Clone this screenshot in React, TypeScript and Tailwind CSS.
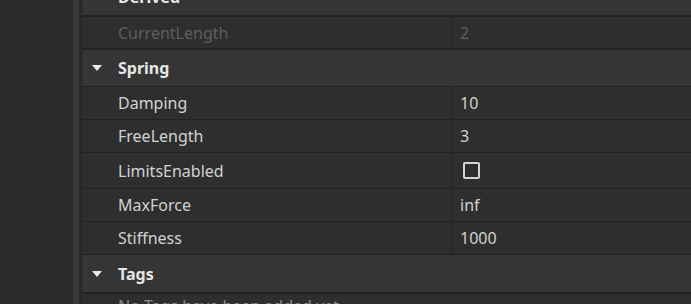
import React from 'react';

type Prop = { name: string; value?: string; checkbox?: boolean; disabled?: boolean; h: string };

const font = { fontFamily: '"Source Sans Pro", "Noto Sans", "Open Sans", sans-serif' };

// ── Section header row ──────────────────────────────────────────────────
function Header({ title, h, border }: { title: string; h: string; border: string }) {
  return (
    <div className={`flex items-center bg-[#353535] ${h} ${border} border-[#222222]`}>
      <div className="w-[36px] flex justify-end pr-[16px]">
        <svg width="10" height="6" viewBox="0 0 10 6">
          <path d="M0 0 H10 L5 6 Z" fill="#e8e8e8" />
        </svg>
      </div>
      <span className="text-[16px] font-bold text-[#e6e6e6]">{title}</span>
    </div>
  );
}

// ── Property row ────────────────────────────────────────────────────────
function Row({ p, border }: { p: Prop; border: string }) {
  const color = p.disabled ? 'text-[#5e5e5e]' : 'text-[#d2d2d2]';
  return (
    <div className={`flex ${p.h} ${border} border-[#222222] bg-[#2e2e2e]`}>
      <div className={`w-[370px] pl-[36px] flex items-center border-r border-[#222222] text-[16px] ${color}`}>
        {p.name}
      </div>
      <div className={`flex-1 pl-[8px] flex items-center text-[16px] ${color}`}>
        {p.checkbox ? (
          <div className="ml-[3px] w-[17px] h-[17px] rounded-[2px] border-2 border-[#d4d4d4]" />
        ) : (
          p.value
        )}
      </div>
    </div>
  );
}

const spring: Prop[] = [
  { name: 'Damping', value: '10', h: 'h-[33px]' },
  { name: 'FreeLength', value: '3', h: 'h-[33px]' },
  { name: 'LimitsEnabled', checkbox: true, h: 'h-[36px]' },
  { name: 'MaxForce', value: 'inf', h: 'h-[33px]' },
  { name: 'Stiffness', value: '1000', h: 'h-[33px]' },
];

export default function App() {
  return (
    <div className="w-[691px] h-[304px] overflow-hidden flex bg-[#2b2b2b] select-none" style={font}>
      <div className="w-[73px] bg-[#2b2b2b]" />
      <div className="w-[6px] bg-[#3a3a3a]" />
      <div className="w-[2px] bg-[#2b2b2b]" />
      <div className="flex-1 border-l border-[#222222] bg-[#2e2e2e]">
        <div className="-mt-[21px] flex flex-col">
          <Header title="Derived" h="h-[38px]" border="border-b-2" />
          <Row p={{ name: 'CurrentLength', value: '2', disabled: true, h: 'h-[33px]' }} border="border-b-2" />
          <Header title="Spring" h="h-[37px]" border="border-b" />
          {spring.map((p) => (
            <Row key={p.name} p={p} border="border-b" />
          ))}
          <Header title="Tags" h="h-[39px]" border="border-b-2" />
          <div className="h-[33px] pl-[36px] pt-[1px] leading-[22px] text-[16px] text-[#8a8a8a] bg-[#2e2e2e]">
            No Tags have been added yet
          </div>
        </div>
      </div>
    </div>
  );
}
